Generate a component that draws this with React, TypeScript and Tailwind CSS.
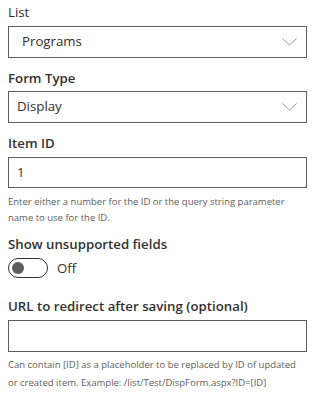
import React from "react";

const font = { fontFamily: '"Open Sans", "Noto Sans", Arial, sans-serif' };

function Chevron() {
  return (
    <svg width="15" height="8" viewBox="0 0 15 8" className="shrink-0">
      <polyline points="0.5,0.5 7.5,7 14.5,0.5" fill="none" stroke="#979593" strokeWidth="1" />
    </svg>
  );
}

export default function App() {
  return (
    <div className="w-[316px] h-[396px] bg-white text-[#323130] overflow-hidden" style={font}>
      <div className="pl-[8px] pr-[9px] flex flex-col">
        <div className="pt-[2px] pb-[4px] text-[13.25px] leading-[20px] font-normal">List</div>
        <div className="h-[32px] border border-[#605e5c] flex items-center justify-between pl-[13px] pr-[9px]">
          <span className="text-[13.25px]">Programs</span>
          <Chevron />
        </div>

        <div className="mt-[10px] pb-[3px] text-[13.25px] leading-[20px] font-semibold">Form Type</div>
        <div className="h-[32px] border border-[#605e5c] flex items-center justify-between pl-[8px] pr-[9px]">
          <span className="text-[13.25px]">Display</span>
          <Chevron />
        </div>

        <div className="mt-[10px] pb-[4px] text-[13.25px] leading-[20px] font-semibold">Item ID</div>
        <div className="h-[31px] border border-[#605e5c] flex items-center pl-[8px]">
          <span className="text-[13.25px]">1</span>
        </div>
        <div className="mt-[6px] text-[9.5px] leading-[16px] text-[#605e5c] whitespace-nowrap">
          Enter either a number for the ID or the query string parameter
          <br />
          name to use for the ID.
        </div>

        <div className="mt-[8px] pb-[4px] text-[13.25px] leading-[20px] font-semibold">Show unsupported fields</div>
        <div className="flex items-center">
          <div className="w-[40px] h-[20px] rounded-full border border-[#323130] flex items-center pl-[3px]">
            <div className="w-[12px] h-[12px] rounded-full bg-[#605e5c]" />
          </div>
          <span className="ml-[9px] text-[13.25px] leading-[20px]">Off</span>
        </div>

        <div className="mt-[18px] pb-[4px] text-[13.25px] leading-[20px] font-semibold">URL to redirect after saving (optional)</div>
        <div className="h-[32px] border border-[#605e5c]" />
        <div className="mt-[4px] text-[9.5px] leading-[18px] text-[#605e5c] whitespace-nowrap">
          Can contain [ID] as a placeholder to be replaced by ID of updated
          <br />
          or created item. Example: /list/Test/DispForm.aspx?ID=[ID]
        </div>
      </div>
    </div>
  );
}
